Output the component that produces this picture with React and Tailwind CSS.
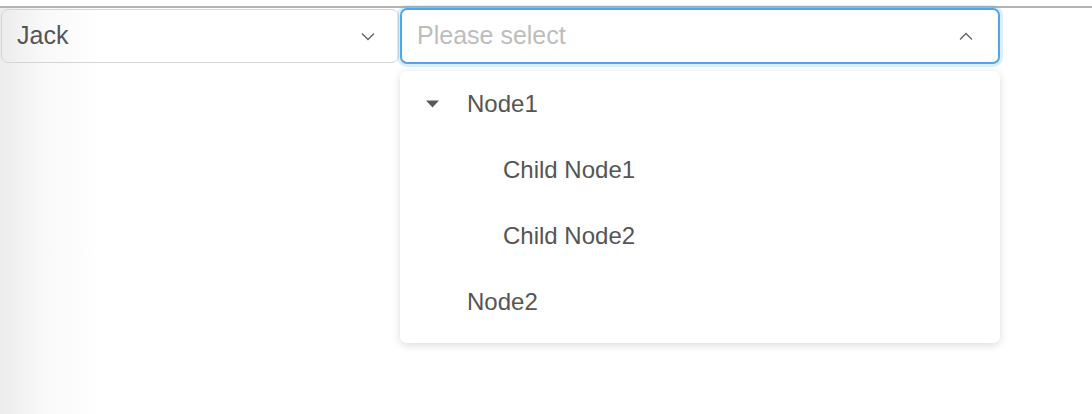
import React from "react";

function Chevron({ up }) {
  return (
    <svg width="14" height="9" viewBox="0 0 14 9" fill="none">
      <polyline
        points={up ? "1,7.5 7,1.5 13,7.5" : "1,1.5 7,7.5 13,1.5"}
        stroke="#666"
        strokeWidth="1.4"
      />
    </svg>
  );
}

function TreeRow({ label, level = 0, open }) {
  return (
    <div className="h-[66px] flex items-center pl-[14px]">
      <div style={{ width: level * 36 }} className="shrink-0" />
      <div className="w-[36px] flex justify-center shrink-0">
        {open && (
          <svg width="13" height="8" viewBox="0 0 13 8">
            <polygon points="0,0.5 13,0.5 6.5,7.5" fill="#595959" />
          </svg>
        )}
      </div>
      <span className="pl-[17px] text-[24px] text-[#555]">{label}</span>
    </div>
  );
}

export default function App() {
  const nodes = [
    { label: "Node1", level: 0, open: true },
    { label: "Child Node1", level: 1 },
    { label: "Child Node2", level: 1 },
    { label: "Node2", level: 0 },
  ];
  return (
    <div className="h-[414px] overflow-hidden bg-white font-['Liberation_Sans',Arial,sans-serif]">
      <div className="h-[6px] bg-white" />
      <div className="h-[2px] bg-[#b3b3b3]" />
      <div className="h-[406px] bg-[linear-gradient(to_right,#ececec,#f9f9f9_45px,#fff_100px)] pl-[1px]">
        <div className="flex items-start gap-[1px]">
          <div className="mt-[1px] w-[398px] h-[54px] border border-[#d4d4d4] rounded-[7px] flex items-center justify-between pl-[15px] pr-[23px]">
            <span className="text-[25px] text-[#555]">Jack</span>
            <Chevron />
          </div>
          <div className="w-[600px] flex flex-col">
            <div className="h-[56px] bg-white border-2 border-[#4ea6ec] rounded-[7px] shadow-[0_0_0_3px_rgba(78,166,236,0.2)] flex items-center justify-between pl-[15px] pr-[25px]">
              <span className="text-[25px] text-[#bdbdbd]">Please select</span>
              <Chevron up />
            </div>
            <div className="mt-[7px] bg-white rounded-[7px] shadow-[0_2px_8px_rgba(0,0,0,0.15)] pb-[8px]">
              {nodes.map((n, i) => (
                <TreeRow key={i} label={n.label} level={n.level} open={n.open} />
              ))}
            </div>
          </div>
        </div>
      </div>
    </div>
  );
}
